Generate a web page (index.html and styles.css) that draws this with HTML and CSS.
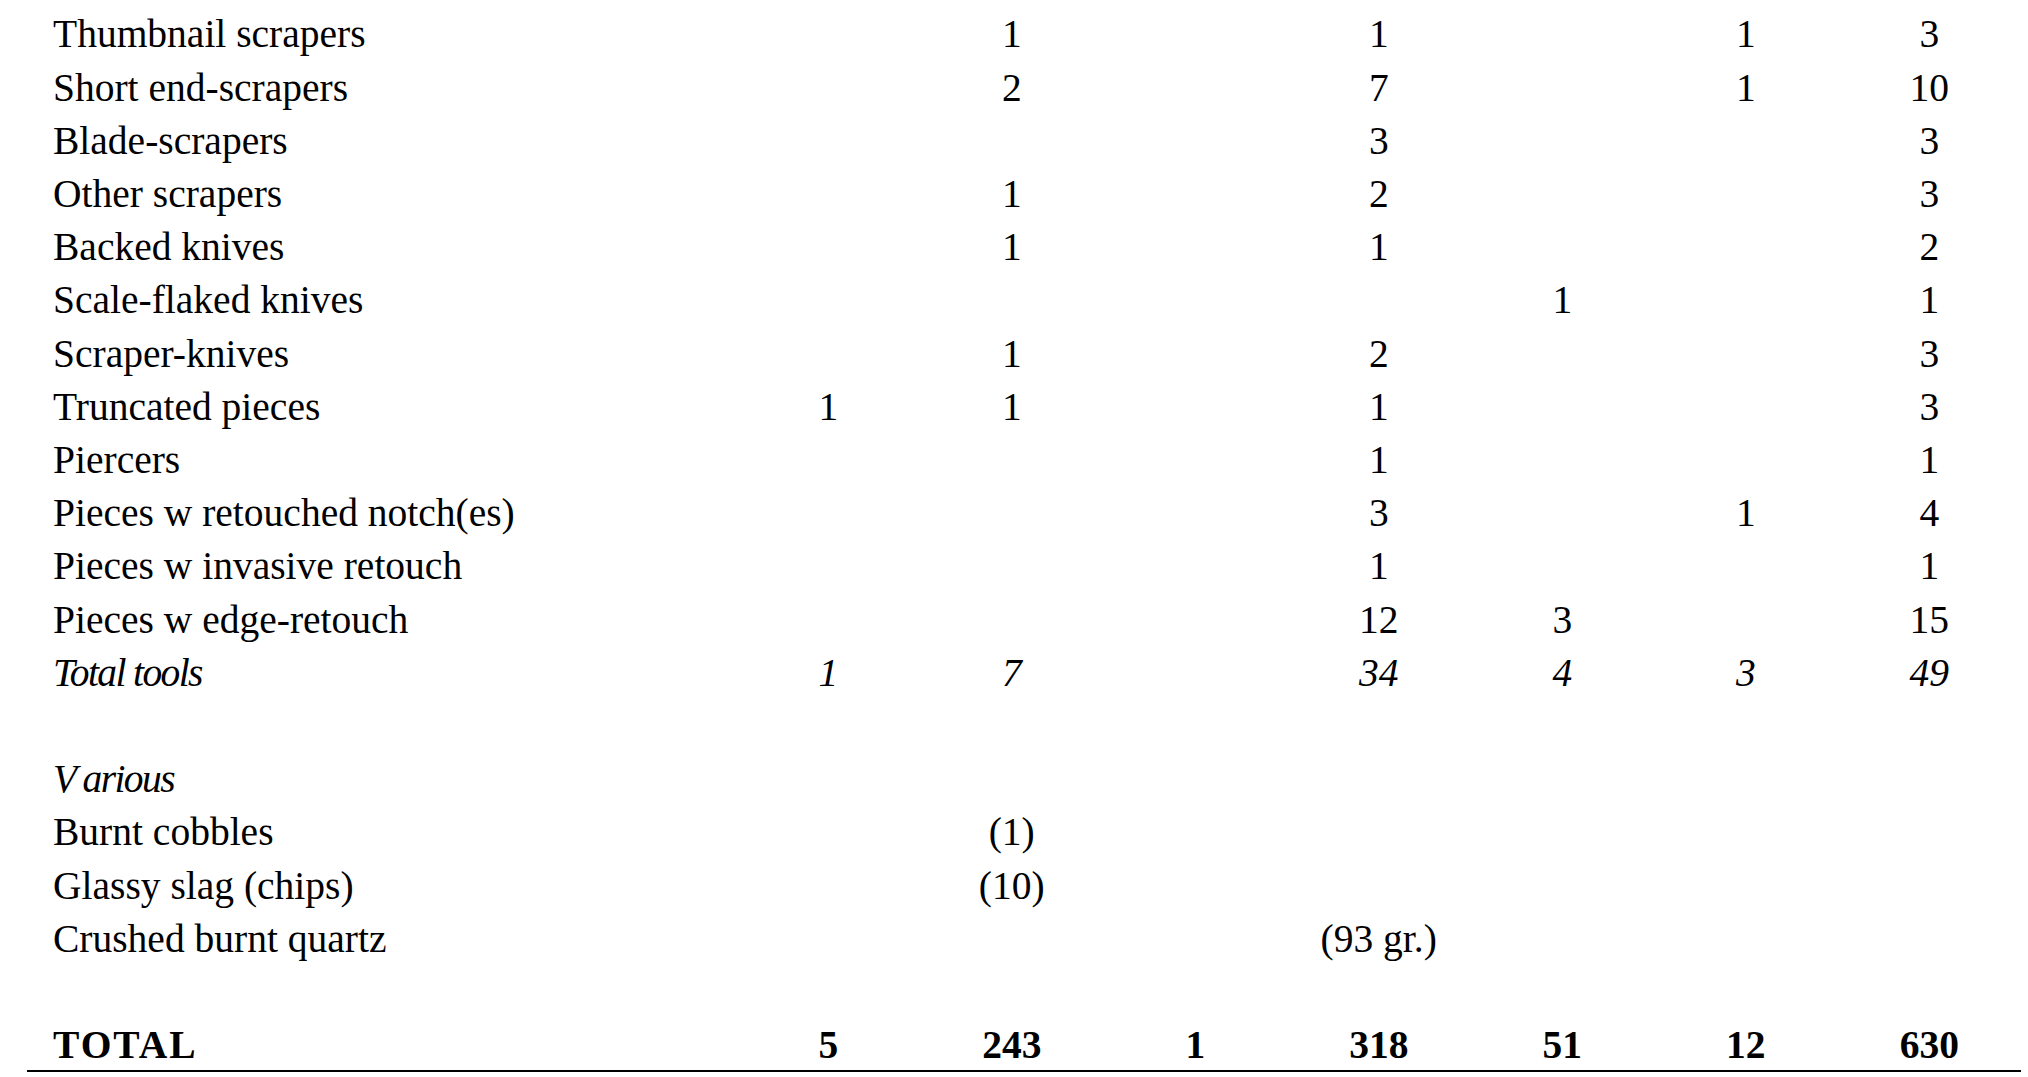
FILE: index.html
```html
<!DOCTYPE html>
<html lang="en">
<head>
<meta charset="utf-8">
<title>Tools table</title>
<link rel="stylesheet" href="styles.css">
</head>
<body>
<div class="page">
<table class="tally">
  <colgroup>
    <col class="c-label">
    <col class="c-num"><col class="c-num"><col class="c-num"><col class="c-num"><col class="c-num"><col class="c-num"><col class="c-num">
  </colgroup>
  <tbody>
    <tr><td>Thumbnail scrapers</td><td></td><td>1</td><td></td><td>1</td><td></td><td>1</td><td>3</td></tr>
    <tr><td>Short end-scrapers</td><td></td><td>2</td><td></td><td>7</td><td></td><td>1</td><td>10</td></tr>
    <tr><td>Blade-scrapers</td><td></td><td></td><td></td><td>3</td><td></td><td></td><td>3</td></tr>
    <tr><td>Other scrapers</td><td></td><td>1</td><td></td><td>2</td><td></td><td></td><td>3</td></tr>
    <tr><td>Backed knives</td><td></td><td>1</td><td></td><td>1</td><td></td><td></td><td>2</td></tr>
    <tr><td>Scale-flaked knives</td><td></td><td></td><td></td><td></td><td>1</td><td></td><td>1</td></tr>
    <tr><td>Scraper-knives</td><td></td><td>1</td><td></td><td>2</td><td></td><td></td><td>3</td></tr>
    <tr><td>Truncated pieces</td><td>1</td><td>1</td><td></td><td>1</td><td></td><td></td><td>3</td></tr>
    <tr><td>Piercers</td><td></td><td></td><td></td><td>1</td><td></td><td></td><td>1</td></tr>
    <tr><td>Pieces w retouched notch(es)</td><td></td><td></td><td></td><td>3</td><td></td><td>1</td><td>4</td></tr>
    <tr><td>Pieces w invasive retouch</td><td></td><td></td><td></td><td>1</td><td></td><td></td><td>1</td></tr>
    <tr><td>Pieces w edge-retouch</td><td></td><td></td><td></td><td>12</td><td>3</td><td></td><td>15</td></tr>
    <tr class="subtotal"><td>Total tools</td><td>1</td><td>7</td><td></td><td>34</td><td>4</td><td>3</td><td>49</td></tr>
    <tr class="spacer"><td colspan="8"></td></tr>
    <tr class="heading"><td>V<span class="kern">arious</span></td><td colspan="7"></td></tr>
    <tr><td>Burnt cobbles</td><td></td><td>(1)</td><td></td><td></td><td></td><td></td><td></td></tr>
    <tr><td>Glassy slag (chips)</td><td></td><td>(10)</td><td></td><td></td><td></td><td></td><td></td></tr>
    <tr><td>Crushed burnt quartz</td><td></td><td></td><td></td><td>(93 gr.)</td><td></td><td></td><td></td></tr>
    <tr class="spacer"><td colspan="8"></td></tr>
    <tr class="grand"><td>TOTAL</td><td>5</td><td>243</td><td>1</td><td>318</td><td>51</td><td>12</td><td>630</td></tr>
  </tbody>
</table>
</div>
</body>
</html>
```

FILE: styles.css
```css
html, body {
  margin: 0;
  padding: 0;
  background: #ffffff;
}

.page {
  padding: 8.4px 0 0 27px;
}

.tally {
  width: 1994px;
  border-collapse: collapse;
  table-layout: fixed;
  font-family: "Liberation Serif", "Times New Roman", serif;
  font-size: 39.5px;
  color: #000;
}

.c-label { width: 709.5px; }
.c-num { width: 183.5px; }

.tally td {
  padding: 0;
  height: 53.2px;
  line-height: 53.2px;
  text-align: center;
  white-space: nowrap;
  vertical-align: top;
}

.tally td:first-child {
  text-align: left;
  padding-left: 26px;
}

.subtotal td,
.heading td {
  font-style: italic;
}

.subtotal td:first-child,
.heading td:first-child {
  letter-spacing: -1.6px;
}

.kern {
  margin-left: 7px;
}

.grand td {
  font-weight: bold;
  height: 47.2px;
  line-height: 49.2px;
  padding-top: 2px;
  border-bottom: 2px solid #000;
}

.grand td:first-child {
  letter-spacing: 2px;
}
```
